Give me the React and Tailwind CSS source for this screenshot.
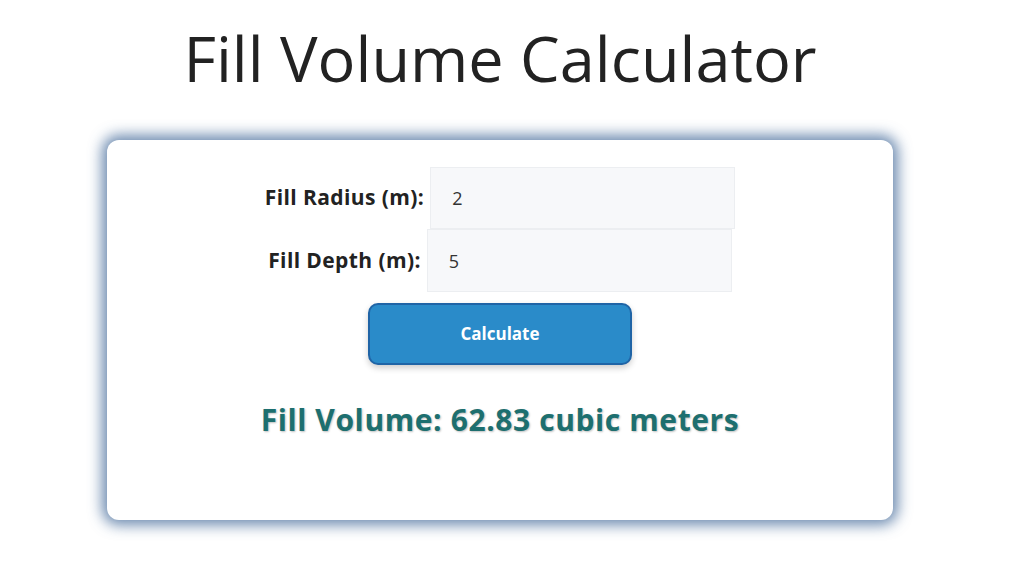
import React, { useState } from 'react';

const App = () => {
  const [radius, setRadius] = useState('2');
  const [depth, setDepth] = useState('5');
  const [volume, setVolume] = useState(62.83);

  const calculate = () => {
    const r = parseFloat(radius) || 0;
    const d = parseFloat(depth) || 0;
    setVolume(Math.round(Math.PI * r * r * d * 100) / 100);
  };

  return (
    <div className="min-h-[570px] w-[1000px] bg-white font-['Open_Sans',sans-serif] text-[#222]">
      <h1 className="pt-[18px] text-center text-[63px] leading-[80px] font-normal text-[#222]">
        Fill Volume Calculator
      </h1>
      <div className="mx-auto mt-[42px] h-[380px] w-[786px] rounded-xl bg-white pt-[27px] shadow-[0_0_14px_5px_rgba(60,100,150,0.75)]">
        <div className="flex justify-center items-center">
          <label className="mr-[6px] text-[21px] tracking-[0.4px] font-bold text-[#222]">Fill Radius (m):</label>
          <input
            value={radius}
            onChange={e => setRadius(e.target.value)}
            className="h-[62px] w-[305px] border border-[#eceef1] bg-[#f7f8fa] px-[21px] text-[18px] text-[#333] outline-none"
          />
        </div>
        <div className="flex justify-center items-center">
          <label className="mr-[6px] text-[21px] tracking-[0.4px] font-bold text-[#222]">Fill Depth (m):</label>
          <input
            value={depth}
            onChange={e => setDepth(e.target.value)}
            className="h-[63px] w-[305px] border border-[#eceef1] bg-[#f7f8fa] px-[21px] text-[18px] text-[#333] outline-none"
          />
        </div>
        <div className="mt-[11px] flex justify-center">
          <button
            onClick={calculate}
            className="h-[62px] w-[264px] rounded-[10px] border-2 border-[#1f64a6] bg-[#2a8bc9] text-[17px] font-bold text-white shadow-[0_3px_6px_rgba(0,0,0,0.2)]"
          >
            Calculate
          </button>
        </div>
        <p className="mt-[32px] text-center text-[30px] tracking-[0.6px] font-bold text-[#1d6f6f] [text-shadow:1px_1px_2px_rgba(0,0,0,0.25)]">
          Fill Volume: {volume.toFixed(2)} cubic meters
        </p>
      </div>
    </div>
  );
};

export default App;
